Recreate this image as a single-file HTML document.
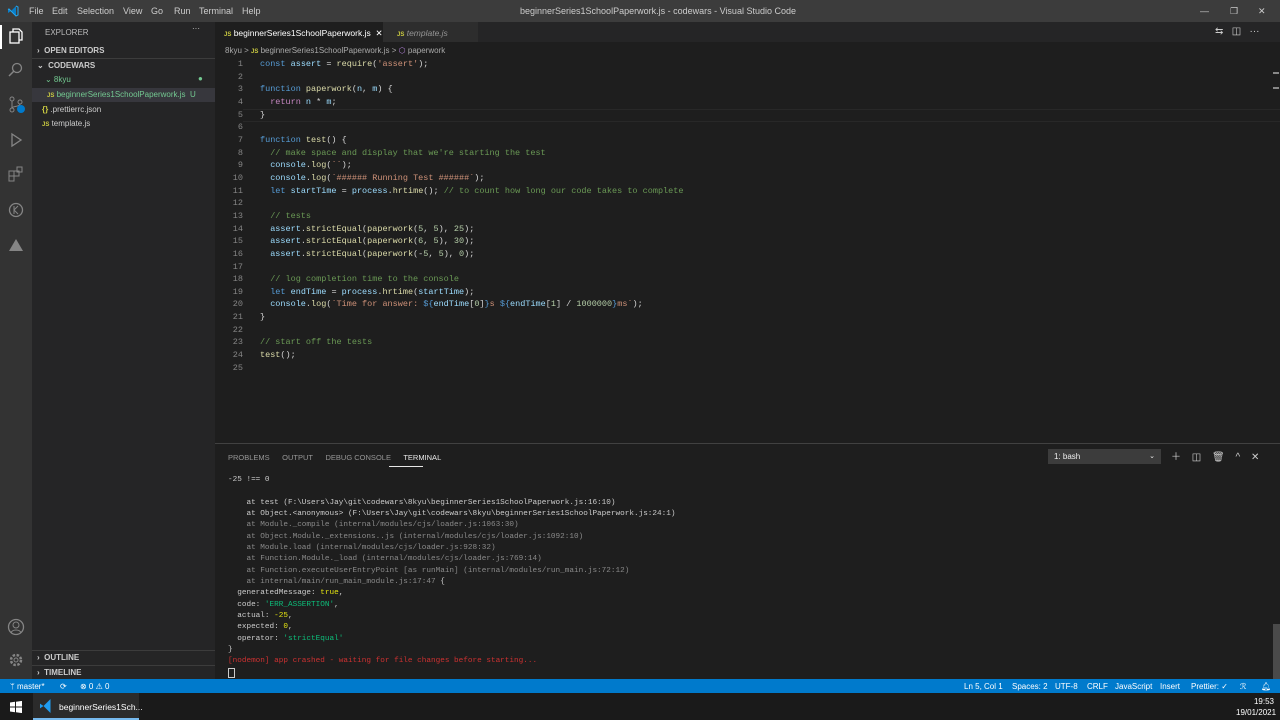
<!DOCTYPE html>
<html><head><meta charset="utf-8"><style>
*{margin:0;padding:0;box-sizing:border-box}
body{width:1280px;height:720px;overflow:hidden;background:#1e1e1e;font-family:"Liberation Sans",sans-serif;color:#ccc;position:relative}
.abs{position:absolute}
.mono{font-family:"Liberation Mono",monospace;white-space:pre}
#title{left:0;top:0;width:1280px;height:22px;background:#3c3c3c;font-size:9px;color:#ccc}
#title span{position:absolute;top:6px}
#act{left:0;top:22px;width:32px;height:657px;background:#333}
#side{left:32px;top:22px;width:183px;height:657px;background:#252526;font-size:8px}
#side div{position:absolute;white-space:nowrap}
#tabs{left:215px;top:22px;width:1065px;height:20px;background:#252526}
.code{left:215px;top:58px;font-size:8.5px;line-height:12.65px}
.ln{color:#858585;text-align:right;width:28px;position:absolute;left:0}
.k{color:#569cd6}.f{color:#dcdcaa}.s{color:#ce9178}.c{color:#6a9955}.v{color:#9cdcfe}.n{color:#b5cea8}.p{color:#d4d4d4}.y{color:#ffd700}
#panel{left:215px;top:443px;width:1065px;height:236px;background:#1e1e1e;border-top:1px solid #414141}
.term{left:228px;top:475px;font-size:7.7px;line-height:11.33px;color:#ccc}
.g{color:#8a8a8a}
#status{left:0;top:679px;width:1280px;height:14px;background:#007acc;color:#fff;font-size:8px}
#status span{position:absolute;top:3px}
#task{left:0;top:693px;width:1280px;height:27px;background:#1a1a1a}
</style></head><body>
<div id="title" class="abs">
<svg class="abs" style="left:7px;top:5px" width="12" height="12" viewBox="0 0 12 12"><path d="M9 1L4 6l5 5V1zM1 4l3 2-3 2z" fill="#0a7ec8"/><path d="M9 1l2 1v8l-2 1L2 4 1 4.5" stroke="#23a9f2" fill="none"/></svg>
<span style="left:29px">File</span><span style="left:52px">Edit</span><span style="left:77px">Selection</span><span style="left:123px">View</span><span style="left:151px">Go</span><span style="left:174px">Run</span><span style="left:199px">Terminal</span><span style="left:242px">Help</span>
<span style="left:520px">beginnerSeries1SchoolPaperwork.js - codewars - Visual Studio Code</span>
<span style="left:1200px">—</span><span style="left:1230px">❐</span><span style="left:1258px">✕</span>
</div>
<div id="act" class="abs">
<div class="abs" style="left:0;top:3px;width:2px;height:24px;background:#fff"></div>
<svg class="abs" style="left:8px;top:6px" width="16" height="16"><rect x="2" y="4" width="9" height="11" fill="none" stroke="#fff" stroke-width="1.3"/><path d="M5 4V1h6l3 3v8h-3" fill="none" stroke="#fff" stroke-width="1.3"/></svg>
<svg class="abs" style="left:8px;top:40px" width="16" height="16"><circle cx="9" cy="6" r="4.5" fill="none" stroke="#858585" stroke-width="1.3"/><path d="M6 9l-5 5" stroke="#858585" stroke-width="1.5"/></svg>
<svg class="abs" style="left:8px;top:74px" width="18" height="18"><circle cx="4" cy="3" r="2" fill="none" stroke="#858585"/><circle cx="4" cy="14" r="2" fill="none" stroke="#858585"/><circle cx="12" cy="6" r="2" fill="none" stroke="#858585"/><path d="M4 5v7M12 8c0 3-8 2-8 4" stroke="#858585" fill="none"/><circle cx="13" cy="13" r="4" fill="#007acc"/></svg>
<svg class="abs" style="left:8px;top:110px" width="16" height="16"><path d="M4 2l9 6-9 6z" fill="none" stroke="#858585" stroke-width="1.3"/></svg>
<svg class="abs" style="left:8px;top:144px" width="16" height="16"><rect x="1" y="5" width="5" height="5" fill="none" stroke="#858585"/><rect x="6" y="5" width="5" height="5" fill="none" stroke="#858585"/><rect x="1" y="10" width="5" height="5" fill="none" stroke="#858585"/><rect x="9" y="1" width="5" height="5" fill="none" stroke="#858585"/></svg>
<svg class="abs" style="left:8px;top:180px" width="16" height="16"><circle cx="8" cy="8" r="6.5" fill="none" stroke="#858585" stroke-width="1.3"/><path d="M6 4v8M6 8l4-4M6 8l4 4" stroke="#858585"/></svg>
<svg class="abs" style="left:8px;top:215px" width="16" height="16"><path d="M8 2l7 12H1z" fill="#858585"/></svg>
<svg class="abs" style="left:7px;top:596px" width="18" height="18"><circle cx="9" cy="9" r="7.5" fill="none" stroke="#858585" stroke-width="1.3"/><circle cx="9" cy="7" r="3" fill="none" stroke="#858585"/><path d="M4 15c1-4 9-4 10 0" fill="none" stroke="#858585"/></svg>
<svg class="abs" style="left:7px;top:629px" width="18" height="18"><circle cx="9" cy="9" r="5" fill="none" stroke="#858585" stroke-width="2.5" stroke-dasharray="2.5 1.5"/><circle cx="9" cy="9" r="2" fill="none" stroke="#858585"/></svg>
</div>
<div id="side" class="abs">
<div style="left:13px;top:6px;color:#bbb">EXPLORER</div><div style="left:160px;top:2px;color:#ccc">···</div>
<div style="left:5px;top:24px;font-weight:bold;color:#ccc">›&nbsp; OPEN EDITORS</div>
<div style="left:0;top:36px;width:183px;height:1px;background:#3c3c3c"></div>
<div style="left:5px;top:39px;font-weight:bold;color:#ccc">⌄&nbsp; CODEWARS</div>
<div style="left:13px;top:53px;color:#73c991">⌄ 8kyu</div><div style="left:166px;top:52px;color:#73c991;font-size:8px">●</div>
<div style="left:0;top:66px;width:183px;height:14px;background:#37373d"></div>
<div style="left:15px;top:68px;color:#73c991"><b style="color:#cbcb41;font-size:6px">JS</b> beginnerSeries1SchoolPaperwork.js&nbsp; U</div>
<div style="left:10px;top:83px"><b style="color:#cbcb41">{}</b> .prettierrc.json</div>
<div style="left:10px;top:97px"><b style="color:#cbcb41;font-size:6px">JS</b> template.js</div>
<div style="left:0;top:628px;width:183px;height:1px;background:#3c3c3c"></div>
<div style="left:5px;top:631px;font-weight:bold">›&nbsp; OUTLINE</div>
<div style="left:0;top:643px;width:183px;height:1px;background:#3c3c3c"></div>
<div style="left:5px;top:646px;font-weight:bold">›&nbsp; TIMELINE</div>
</div>
<div id="tabs" class="abs">
<div class="abs" style="left:0;top:0;width:168px;height:20px;background:#1e1e1e;font-size:8.5px;color:#fff;padding:6px 0 0 9px;white-space:nowrap"><b style="color:#cbcb41;font-size:6px">JS</b> beginnerSeries1SchoolPaperwork.js&nbsp; ✕</div>
<div class="abs" style="left:168px;top:0;width:95px;height:20px;background:#2d2d2d;font-size:8.5px;color:#969696;padding:6px 0 0 14px;font-style:italic;white-space:nowrap"><b style="color:#cbcb41;font-size:6px;font-style:normal">JS</b> template.js</div>
<div class="abs" style="left:1000px;top:4px;color:#ccc;font-size:10px">⇆&nbsp;&nbsp; ◫&nbsp;&nbsp; ···</div>
</div>
<div class="abs" style="left:225px;top:46px;font-size:8px;color:#a9a9a9;white-space:nowrap">8kyu &gt; <b style="color:#cbcb41;font-size:6px">JS</b> beginnerSeries1SchoolPaperwork.js &gt; <span style="color:#b180d7">⬡</span> paperwork</div>
<div class="abs" style="left:243px;top:109px;width:1037px;height:13px;border-top:1px solid #282828;border-bottom:1px solid #282828"></div>
<div class="abs code mono"><div style="position:absolute;left:0;top:0;width:28px" class="ln">1
2
3
4
5
6
7
8
9
10
11
12
13
14
15
16
17
18
19
20
21
22
23
24
25</div><div style="position:absolute;left:45px;top:0" class="p"><span class="k">const</span> <span class="v">assert</span> = <span class="f">require</span>(<span class="s">'assert'</span>);

<span class="k">function</span> <span class="f">paperwork</span>(<span class="v">n</span>, <span class="v">m</span>) {
  <span style="color:#c586c0">return</span> <span class="v">n</span> * <span class="v">m</span>;
}

<span class="k">function</span> <span class="f">test</span>() {
  <span class="c">// make space and display that we're starting the test</span>
  <span class="v">console</span>.<span class="f">log</span>(<span class="s">``</span>);
  <span class="v">console</span>.<span class="f">log</span>(<span class="s">`###### Running Test ######`</span>);
  <span class="k">let</span> <span class="v">startTime</span> = <span class="v">process</span>.<span class="f">hrtime</span>(); <span class="c">// to count how long our code takes to complete</span>

  <span class="c">// tests</span>
  <span class="v">assert</span>.<span class="f">strictEqual</span>(<span class="f">paperwork</span>(<span class="n">5</span>, <span class="n">5</span>), <span class="n">25</span>);
  <span class="v">assert</span>.<span class="f">strictEqual</span>(<span class="f">paperwork</span>(<span class="n">6</span>, <span class="n">5</span>), <span class="n">30</span>);
  <span class="v">assert</span>.<span class="f">strictEqual</span>(<span class="f">paperwork</span>(-<span class="n">5</span>, <span class="n">5</span>), <span class="n">0</span>);

  <span class="c">// log completion time to the console</span>
  <span class="k">let</span> <span class="v">endTime</span> = <span class="v">process</span>.<span class="f">hrtime</span>(<span class="v">startTime</span>);
  <span class="v">console</span>.<span class="f">log</span>(<span class="s">`Time for answer: </span><span class="k">${</span><span class="v">endTime</span>[<span class="n">0</span>]<span class="k">}</span><span class="s">s </span><span class="k">${</span><span class="v">endTime</span>[<span class="n">1</span>] / <span class="n">1000000</span><span class="k">}</span><span class="s">ms`</span>);
}

<span class="c">// start off the tests</span>
<span class="f">test</span>();
</div></div>
<div class="abs" style="left:1273px;top:72px;width:6px;height:2px;background:#888"></div>
<div class="abs" style="left:1273px;top:87px;width:6px;height:2px;background:#888"></div>
<div id="panel" class="abs">
<div class="abs" style="left:13px;top:9px;font-size:7.5px;color:#969696;white-space:nowrap">PROBLEMS&nbsp;&nbsp;&nbsp;&nbsp;&nbsp; OUTPUT&nbsp;&nbsp;&nbsp;&nbsp;&nbsp; DEBUG CONSOLE&nbsp;&nbsp;&nbsp;&nbsp;&nbsp; <span style="color:#e7e7e7">TERMINAL</span></div>
<div class="abs" style="left:174px;top:22px;width:34px;height:1px;background:#e7e7e7"></div>
<div class="abs" style="left:833px;top:5px;width:113px;height:15px;background:#3c3c3c;font-size:8px;color:#f0f0f0;padding:3px 6px">1: bash<span style="float:right;font-size:7px">⌄</span></div>
<div class="abs" style="left:956px;top:4px;font-size:10px;color:#ccc;white-space:nowrap;word-spacing:8px">＋ ◫ 🗑 ^ ✕</div>
<div class="abs" style="left:1058px;top:180px;width:7px;height:56px;background:#4a4a4a"></div>
</div>
<div class="abs term mono">-25 !== 0

    at test (F:\Users\Jay\git\codewars\8kyu\beginnerSeries1SchoolPaperwork.js:16:10)
    at Object.&lt;anonymous&gt; (F:\Users\Jay\git\codewars\8kyu\beginnerSeries1SchoolPaperwork.js:24:1)
<span class="g">    at Module._compile (internal/modules/cjs/loader.js:1063:30)
    at Object.Module._extensions..js (internal/modules/cjs/loader.js:1092:10)
    at Module.load (internal/modules/cjs/loader.js:928:32)
    at Function.Module._load (internal/modules/cjs/loader.js:769:14)
    at Function.executeUserEntryPoint [as runMain] (internal/modules/run_main.js:72:12)
    at internal/main/run_main_module.js:17:47</span> {
  generatedMessage: <span style="color:#e5e510">true</span>,
  code: <span style="color:#0dbc79">'ERR_ASSERTION'</span>,
  actual: <span style="color:#e5e510">-25</span>,
  expected: <span style="color:#e5e510">0</span>,
  operator: <span style="color:#0dbc79">'strictEqual'</span>
}
<span style="color:#cd3131">[nodemon] app crashed - waiting for file changes before starting...</span>
<span style="border:1px solid #ccc">&nbsp;</span></div>
<div id="status" class="abs">
<span style="left:10px">ᛘ master*</span><span style="left:60px">⟳</span><span style="left:80px">⊗ 0 ⚠ 0</span>
<span style="left:964px">Ln 5, Col 1</span><span style="left:1012px">Spaces: 2</span><span style="left:1055px">UTF-8</span><span style="left:1087px">CRLF</span><span style="left:1115px">JavaScript</span><span style="left:1160px">Insert</span><span style="left:1191px">Prettier: ✓</span><span style="left:1240px">ℛ</span><span style="left:1261px">🔔︎</span>
</div>
<div id="task" class="abs">
<svg class="abs" style="left:10px;top:8px" width="12" height="12"><path d="M0 1.5l5-.7v4.7H0zM6 .7l6-.8v5.6H6zM0 6.5h5v4.7l-5-.7zM6 6.5h6v5.6l-6-.8z" fill="#fff"/></svg>
<div class="abs" style="left:33px;top:0;width:106px;height:27px;background:#2b2b2b;border-bottom:2px solid #76b9ed"></div>
<svg class="abs" style="left:40px;top:6px" width="14" height="14" viewBox="0 0 12 12"><path d="M9 0L3 6l6 6V0zM0 4l3 2-3 2z" fill="#1f9cf0"/></svg>
<div class="abs" style="left:59px;top:9px;font-size:8.5px;color:#fff">beginnerSeries1Sch...</div>
<div class="abs" style="left:1236px;top:3px;font-size:8px;color:#fff;text-align:right;width:38px;line-height:11px">19:53<br>19/01/2021</div>
</div>
</body></html>
